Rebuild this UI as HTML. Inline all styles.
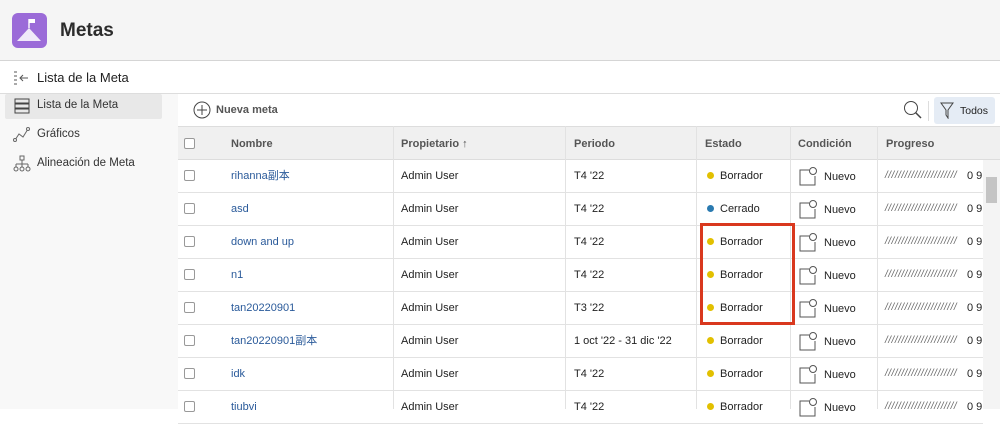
<!DOCTYPE html><html><head><meta charset="utf-8"><style>
*{box-sizing:border-box;margin:0;padding:0}
body{width:1000px;height:409px;overflow:hidden;font-family:"Liberation Sans","Noto Sans CJK SC",sans-serif;background:#fff;position:relative;color:#222}
.hdr{position:absolute;left:0;top:0;width:1000px;height:61px;background:#f5f5f5;border-bottom:1px solid #d5d5d5}
.logo{position:absolute;left:12px;top:13px;width:35px;height:35px;border-radius:6px;background:#9b6bd8}
.title{position:absolute;left:60px;top:20px;font-size:19px;font-weight:bold;color:#2c2c2c}
.bc{position:absolute;left:0;top:62px;width:1000px;height:32px;background:#fff;border-bottom:1px solid #ddd}
.bc span{position:absolute;left:37px;top:8px;font-size:13px}
.side{position:absolute;left:0;top:94px;width:178px;height:315px;background:#f8f8f8}
.si{position:absolute;left:37px;font-size:11.5px;color:#333}
.sel{position:absolute;left:5px;top:0;width:157px;height:25px;background:#e8e8e8;border-radius:2px}
.tb{position:absolute;left:178px;top:94px;width:822px;height:32px}
.th{position:absolute;left:178px;top:126px;width:822px;height:34px;background:#f0f0f0;border-top:1px solid #ddd;border-bottom:1px solid #ddd}
.c{position:absolute;font-size:11px;white-space:nowrap;line-height:14px}
.th .c{font-weight:bold;color:#555;top:10px}
.row{position:absolute;left:178px;width:805px;height:33px;border-bottom:1px solid #e2e2e2}
.row .c{top:8px;height:16px;line-height:16px}
.cb{position:absolute;left:6px;width:11px;height:11px;border:1px solid #999;border-radius:2px;background:#fff}
.vl{position:absolute;top:126px;height:283px;width:1px;background:#e2e2e2}
.dot{display:inline-block;width:7px;height:7px;border-radius:50%;background:#e2c000;margin-right:6px;vertical-align:0}
a{color:#2a5a9a;text-decoration:none}
.sb{position:absolute;left:983px;top:160px;width:17px;height:249px;background:#f4f4f4}
</style></head><body>
<div class="hdr"><div class="logo"><svg width="35" height="35"><path d="M5 28 L17 15 L29 28Z" fill="#fff" opacity=".85"/><path d="M17 15V6" stroke="#fff" stroke-width="1.4"/><path d="M17 6h6v4h-6z" fill="#fff"/></svg></div><div class="title">Metas</div></div>
<div class="bc"><svg style="position:absolute;left:13px;top:9px" width="16" height="14"><path d="M1 1h3M1 5h3M1 9h3M1 13h3M7 7h8M10 4l-3 3 3 3" stroke="#555" fill="none" stroke-width="1"/></svg><span>Lista de la Meta</span></div>
<div class="side"><div class="sel"></div>
<svg style="position:absolute;left:14px;top:4px" width="16" height="16"><rect x="1" y="1" width="14" height="4" fill="none" stroke="#444"/><rect x="1" y="6" width="14" height="4" fill="none" stroke="#444"/><rect x="1" y="11" width="14" height="4" fill="none" stroke="#444"/></svg>
<div class="si" style="top:5px">Lista de la Meta</div>
<svg style="position:absolute;left:13px;top:32px" width="18" height="16"><path d="M2 14L6 8L10 11L15 3" stroke="#666" fill="none"/><circle cx="2" cy="14" r="1.5" fill="#fff" stroke="#666"/><circle cx="15" cy="3" r="1.5" fill="#fff" stroke="#666"/></svg>
<div class="si" style="top:34px">Gráficos</div>
<svg style="position:absolute;left:13px;top:61px" width="18" height="18"><rect x="7" y="1" width="4" height="4" fill="none" stroke="#666"/><path d="M9 5v4M3 9h12M3 9v3M9 9v3M15 9v3" stroke="#666"/><circle cx="3" cy="14" r="2" fill="none" stroke="#666"/><circle cx="9" cy="14" r="2" fill="none" stroke="#666"/><circle cx="15" cy="14" r="2" fill="none" stroke="#666"/></svg>
<div class="si" style="top:63px">Alineación de Meta</div></div>
<div class="tb"><svg style="position:absolute;left:15px;top:7px" width="18" height="18"><circle cx="9" cy="9" r="8" fill="none" stroke="#444"/><path d="M9 4v10M4 9h10" stroke="#444"/></svg><span class="c" style="left:38px;top:9px;font-weight:bold;color:#555">Nueva meta</span>
<svg style="position:absolute;left:725px;top:6px" width="20" height="20"><circle cx="8" cy="8" r="6.5" fill="none" stroke="#444"/><path d="M12.5 12.5L18 18" stroke="#444" stroke-width="1.5"/></svg>
<div style="position:absolute;left:750px;top:7px;width:1px;height:20px;background:#ddd"></div>
<div style="position:absolute;left:756px;top:3px;width:61px;height:27px;background:#e5ecf5;border-radius:3px"><svg style="position:absolute;left:6px;top:5px" width="14" height="17"><path d="M1 1h12L8 8v8L6 13V8Z" fill="none" stroke="#444"/></svg><span class="c" style="left:26px;top:7px;font-size:10.5px">Todos</span></div></div>
<div class="th"><div class="cb" style="top:11px"></div>
<span class="c" style="left:53px">Nombre</span>
<span class="c" style="left:223px">Propietario ↑</span>
<span class="c" style="left:396px">Periodo</span>
<span class="c" style="left:527px">Estado</span>
<span class="c" style="left:620px">Condición</span>
<span class="c" style="left:708px">Progreso</span></div>
<div class="vl" style="left:393px"></div><div class="vl" style="left:565px"></div><div class="vl" style="left:696px"></div><div class="vl" style="left:790px"></div><div class="vl" style="left:877px"></div>
<div id="rows"></div>
<script>
var d=[["rihanna副本","T4 '22","Borrador"],["asd","T4 '22","Cerrado"],["down and up","T4 '22","Borrador"],["n1","T4 '22","Borrador"],["tan20220901","T3 '22","Borrador"],["tan20220901副本","1 oct '22 - 31 dic '22","Borrador"],["idk","T4 '22","Borrador"],["tiubvi","T4 '22","Borrador"]];
var h="";d.forEach(function(r,i){var t=160+i*33;h+='<div class="row" style="top:'+t+'px"><div class="cb" style="top:10px"></div><span class="c" style="left:53px"><a>'+r[0]+'</a></span><span class="c" style="left:223px">Admin User</span><span class="c" style="left:396px">'+r[1]+'</span><span class="c" style="left:529px"><span class="dot" style="background:'+(r[2]=="Cerrado"?"#2a7ab0":"#e2c000")+'"></span>'+r[2]+'</span><svg style="position:absolute;left:620px;top:6px" width="20" height="20"><path d="M11 4H2v15h15V10" fill="none" stroke="#555"/><circle cx="15" cy="5" r="3.5" fill="#fff" stroke="#555"/></svg><span class="c" style="left:646px;top:9px">Nuevo</span><span class="c" style="left:707px;color:#666;letter-spacing:0.5px;font-size:10px;font-style:italic">//////////////////////</span><span class="c" style="left:789px">0 9</span></div>'});
document.getElementById("rows").innerHTML=h;
</script>
<div class="sb"><div style="position:absolute;left:3px;top:17px;width:11px;height:26px;background:#c4c4c4"></div></div>
<div style="position:absolute;left:700px;top:223px;width:95px;height:102px;border:3px solid #d9381e"></div>
</body></html>
